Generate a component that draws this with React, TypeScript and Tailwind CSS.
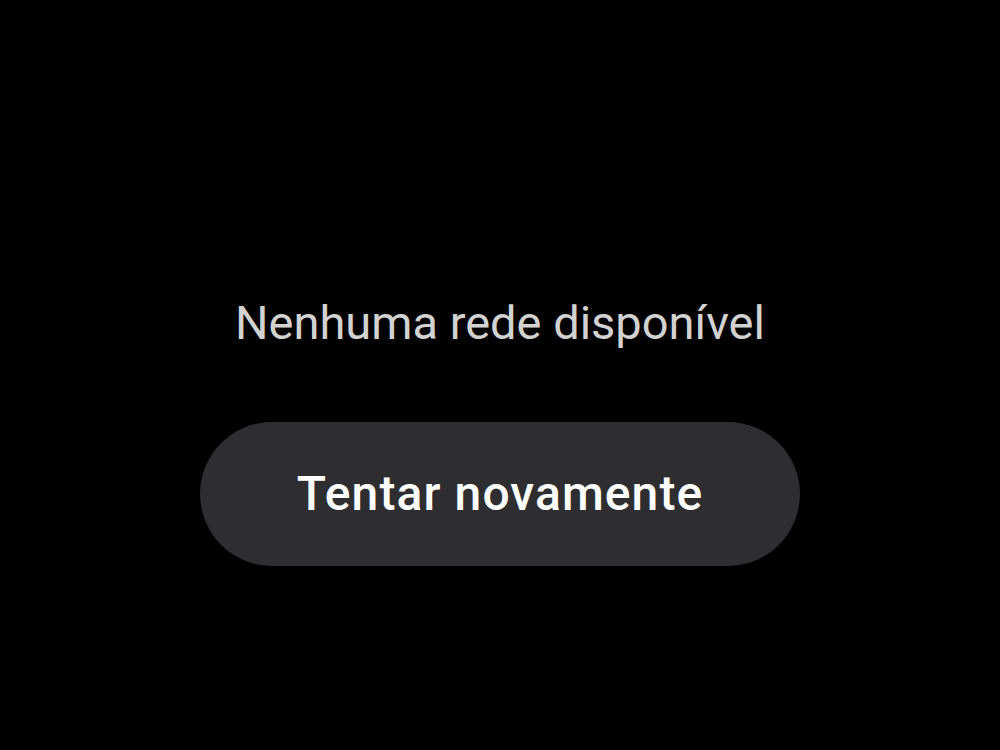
export default function App() {
  return (
    <div
      className="w-[1000px] h-[750px] bg-black flex flex-col items-center"
      style={{ fontFamily: 'Roboto, "Noto Sans", sans-serif' }}
    >
      <p className="mt-[295px] text-[47px] leading-[56px] text-[#d2d2d2]">Nenhuma rede disponível</p>
      <button className="mt-[71px] w-[600px] h-[144px] rounded-full bg-[#2e2e30] text-white text-[48px] font-medium tracking-[1.1px]">
        Tentar novamente
      </button>
    </div>
  );
}
